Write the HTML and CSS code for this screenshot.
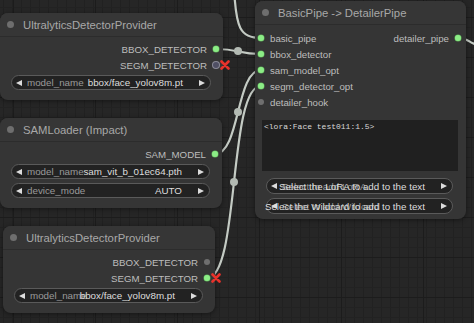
FILE: index.html
```html
<!DOCTYPE html>
<html>
<head>
<meta charset="utf-8">
<link rel="stylesheet" href="styles.css">
</head>
<body>
<div class="canvas">
  <svg class="wires" width="474" height="323" viewBox="0 0 474 323">
    <g class="links">
      <path d="M234,-12 C236,28 240,38 261,38"/>
      <path d="M216,49 C240,49 237,54 261,54"/>
      <path d="M215,154 C240,154 236,70 261,70"/>
      <path d="M207,278 C240,278 228,86 261,86"/>
      <path d="M458,38 C470,38 468,44 482,46"/>
    </g>
    <g class="mids">
      <circle cx="238" cy="51" r="4"/>
      <circle cx="238" cy="112" r="4"/>
      <circle cx="234" cy="182" r="4"/>
    </g>
  </svg>

  <section class="node n1">
    <header class="title"><span class="tdot"></span>UltralyticsDetectorProvider</header>
    <div class="body">
      <div class="slot out"><span>BBOX_DETECTOR</span><i class="dot on"></i></div>
      <div class="slot out"><span>SEGM_DETECTOR</span><i class="dot ring"><svg class="x" viewBox="0 0 10 10"><path d="M1.5,1.5 L8.5,8.5 M8.5,1.5 L1.5,8.5"/></svg></i></div>
      <div class="widget"><span class="arr l"></span><span class="field"><span class="lbl">model_name</span><span class="val">bbox/face_yolov8m.pt</span></span><span class="arr r"></span></div>
    </div>
  </section>

  <section class="node n2">
    <header class="title"><span class="tdot"></span>BasicPipe -&gt; DetailerPipe</header>
    <div class="body b2">
      <div class="io">
        <div class="col">
          <div class="slot in"><i class="dot on"></i><span>basic_pipe</span></div>
          <div class="slot in"><i class="dot on"></i><span>bbox_detector</span></div>
          <div class="slot in"><i class="dot on"></i><span>sam_model_opt</span></div>
          <div class="slot in"><i class="dot on"></i><span>segm_detector_opt</span></div>
          <div class="slot in"><i class="dot off"></i><span>detailer_hook</span></div>
        </div>
        <div class="col">
          <div class="slot out o2"><span>detailer_pipe</span><i class="dot on"></i></div>
        </div>
      </div>
      <div class="text">&lt;lora:Face test011:1.5&gt;</div>
      <div class="widget w2"><span class="arr l"></span><span class="field"><span class="lbl">Select to add LoRA</span><span class="val">Select the LoRA to add to the text</span></span><span class="arr r"></span></div>
      <div class="widget w2"><span class="arr l"></span><span class="field"><span class="lbl">Select to add Wildcard</span><span class="val">Select the Wildcard to add to the text</span></span><span class="arr r"></span></div>
    </div>
  </section>

  <section class="node n3">
    <header class="title"><span class="tdot"></span>SAMLoader (Impact)</header>
    <div class="body">
      <div class="slot out"><span>SAM_MODEL</span><i class="dot on"></i></div>
      <div class="widget"><span class="arr l"></span><span class="field"><span class="lbl">model_name</span><span class="val">sam_vit_b_01ec64.pth</span></span><span class="arr r"></span></div>
      <div class="widget"><span class="arr l"></span><span class="field"><span class="lbl">device_mode</span><span class="val">AUTO</span></span><span class="arr r"></span></div>
    </div>
  </section>

  <section class="node n4">
    <header class="title"><span class="tdot"></span>UltralyticsDetectorProvider</header>
    <div class="body">
      <div class="slot out o4"><span>BBOX_DETECTOR</span><i class="dot off"></i></div>
      <div class="slot out o4"><span>SEGM_DETECTOR</span><i class="dot on"><svg class="x" viewBox="0 0 10 10"><path d="M1.5,1.5 L8.5,8.5 M8.5,1.5 L1.5,8.5"/></svg></i></div>
      <div class="widget"><span class="arr l"></span><span class="field"><span class="lbl">model_name</span><span class="val">bbox/face_yolov8m.pt</span></span><span class="arr r"></span></div>
    </div>
  </section>
</div>
</body>
</html>
```

FILE: styles.css
```css
* { box-sizing: border-box; }

html, body {
  margin: 0;
  padding: 0;
}

body {
  width: 474px;
  height: 323px;
  overflow: hidden;
  font-family: "Liberation Sans", Arial, sans-serif;
  background-color: #262626;
  background-image:
    linear-gradient(#1c1c1c 1px, transparent 1px),
    linear-gradient(90deg, #1c1c1c 1px, transparent 1px),
    linear-gradient(#222222 1px, transparent 1px),
    linear-gradient(90deg, #212121 1px, transparent 1px);
  background-size: 40px 40px, 82px 82px, 10px 10px, 9px 9px;
  background-position: 0 17px, 13px 0, 0 7px, 3px 0;
}

.canvas {
  position: relative;
  width: 474px;
  height: 323px;
  overflow: hidden;
}

.wires {
  position: absolute;
  left: 0;
  top: 0;
}

.links path {
  fill: none;
  stroke: #c4cbc4;
  stroke-width: 2.2;
  stroke-linecap: round;
}

.mids circle {
  fill: #b3bab3;
}

.node {
  position: absolute;
  background: #353535;
  border-radius: 8px;
  box-shadow: 0 1px 5px rgba(0, 0, 0, 0.45);
}

.n1 { left: 0; top: 13px; width: 223px; }
.n2 { left: 255px; top: 1px; width: 211px; }
.n3 { left: 0; top: 118px; width: 222px; }
.n4 { left: 3px; top: 226px; width: 212px; }

.title {
  height: 24px;
  display: flex;
  align-items: center;
  gap: 9px;
  padding-left: 7px;
  color: #a8a8a8;
  font-size: 11.3px;
  white-space: nowrap;
  background: #363636;
  border-radius: 8px 8px 0 0;
  border-bottom: 1px solid #2c2c2c;
}

.tdot {
  width: 7px;
  height: 7px;
  border-radius: 50%;
  background: #6e6e6e;
  flex: none;
}

.body {
  display: flex;
  flex-direction: column;
  padding: 4px 0 10px;
}

.b2 {
  padding: 5px 0 5px;
}

.io {
  display: flex;
  justify-content: space-between;
}

.col {
  display: flex;
  flex-direction: column;
}

.slot {
  height: 16px;
  display: flex;
  align-items: center;
  font-size: 9.7px;
  color: #bdbdbd;
  white-space: nowrap;
}

.out {
  justify-content: flex-end;
  gap: 6px;
  padding-right: 4px;
}

.o2, .o4 {
  padding-right: 5px;
}

.in {
  gap: 6px;
  padding-left: 3px;
}

.dot {
  position: relative;
  display: block;
  width: 6px;
  height: 6px;
  border-radius: 50%;
  flex: none;
}

.dot.on {
  background: #8ced86;
  box-shadow: 0 0 0 0.5px #5fae5a;
}

.dot.off {
  background: #6f6f6f;
}

.dot.ring {
  background: #4f4f63;
  box-shadow: 0 0 0 1px #8a8a96;
}

.x {
  position: absolute;
  left: 7px;
  top: -2px;
  width: 10px;
  height: 10px;
}

.x path {
  stroke: #e8322b;
  stroke-width: 2.6;
  stroke-linecap: round;
  fill: none;
}

.widget {
  height: 15px;
  margin: 2px 12px 0 11px;
  display: flex;
  align-items: center;
  padding: 0 5px 0 4px;
  border: 1px solid #5a5a5a;
  border-radius: 8px;
  background: #222222;
  font-size: 9.8px;
  white-space: nowrap;
}

.widget + .widget {
  margin-top: 4px;
}

.w2 {
  height: 16px;
  margin-left: 11px;
  margin-right: 13px;
}

.text + .w2 {
  margin-top: 7px;
}

.arr {
  width: 0;
  height: 0;
  flex: none;
  border-top: 3.5px solid transparent;
  border-bottom: 3.5px solid transparent;
  position: relative;
  z-index: 0;
}

.arr.l {
  border-right: 6px solid #dcdcdc;
  margin-right: 5px;
}

.arr.r {
  border-left: 6px solid #dcdcdc;
  margin-left: 16px;
}

.field {
  flex: 1;
  min-width: 0;
  display: grid;
  grid-template-columns: minmax(0, 1fr);
  line-height: 13px;
}

.lbl, .val {
  grid-area: 1 / 1;
  min-width: 0;
}

.lbl {
  color: #9a9a9a;
}

.val {
  display: flex;
  justify-content: flex-end;
  color: #dedede;
}

.text {
  margin: 10px 8px 0 7px;
  height: 51px;
  padding: 2px 2px;
  background: #202020;
  color: #d8d8d8;
  font-family: "Liberation Mono", "DejaVu Sans Mono", monospace;
  font-size: 8px;
  line-height: 10px;
  white-space: pre;
}
```
